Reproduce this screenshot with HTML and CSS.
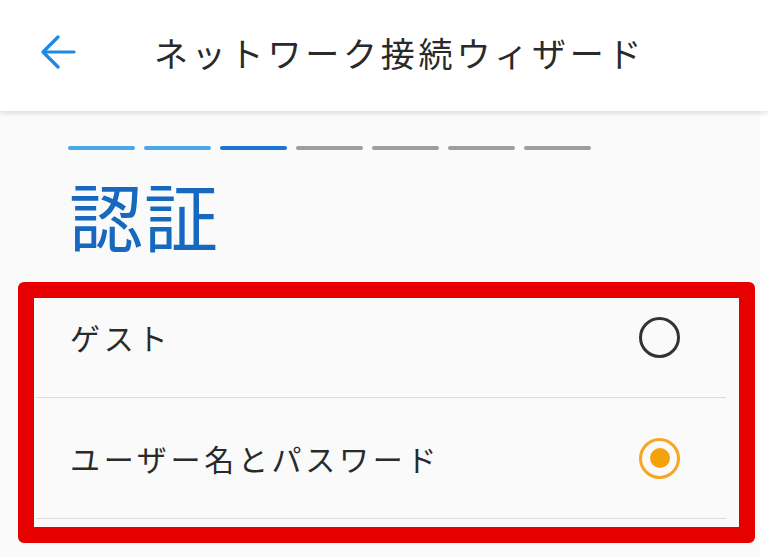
FILE: index.html
```html
<!DOCTYPE html>
<html lang="ja">
<head>
<meta charset="utf-8">
<title>ネットワーク接続ウィザード</title>
<link rel="stylesheet" href="styles.css">
</head>
<body>
<div class="page">
  <header class="appbar">
    <button class="back" aria-label="戻る">
      <svg width="36" height="34" viewBox="0 0 36 34" fill="none" stroke="#1e88e5" stroke-width="3.2" stroke-linecap="round" stroke-linejoin="round">
        <path d="M3 17 H33"/>
        <path d="M17 2 L2 17 L17 32"/>
      </svg>
    </button>
    <h1 class="appbar-title">ネットワーク接続ウィザード</h1>
  </header>
  <main class="content">
    <div class="steps">
      <span class="step done"></span>
      <span class="step done"></span>
      <span class="step current"></span>
      <span class="step"></span>
      <span class="step"></span>
      <span class="step"></span>
      <span class="step"></span>
    </div>
    <h2 class="section-title">認証</h2>
    <ul class="options">
      <li class="option">
        <span class="option-label">ゲスト</span>
        <span class="radio"></span>
      </li>
      <li class="option">
        <span class="option-label">ユーザー名とパスワード</span>
        <span class="radio checked"></span>
      </li>
    </ul>
    <div class="highlight"></div>
  </main>
</div>
</body>
</html>
```
FILE: styles.css
```css
html, body {
  margin: 0;
  padding: 0;
  background: #ffffff;
}
body {
  font-family: "Noto Sans CJK JP", "Noto Sans", sans-serif;
  width: 768px;
  height: 557px;
  overflow: hidden;
}
.page {
  width: 760px;
  height: 557px;
  background: #fafafa;
  position: relative;
}
.appbar {
  height: 111px;
  background: #ffffff;
  display: flex;
  align-items: center;
  box-shadow: 0 2px 5px rgba(0, 0, 0, 0.13);
  position: relative;
  z-index: 1;
  width: 768px;
}
.back {
  border: none;
  background: none;
  padding: 0;
  margin: 0 0 0 41px;
  width: 36px;
  height: 34px;
  display: flex;
  align-items: center;
  justify-content: center;
  position: relative;
  top: -4px;
}
.appbar-title {
  margin: 0 0 0 77px;
  font-size: 34px;
  font-weight: 400;
  letter-spacing: 3.8px;
  color: #2a2a2a;
  line-height: 1;
  position: relative;
  top: -3px;
}
.content {
  padding-top: 35px;
}
.steps {
  display: flex;
  gap: 9px;
  margin-left: 68px;
}
.step {
  width: 67px;
  height: 4px;
  border-radius: 2px;
  background: #9e9e9e;
}
.step.done {
  background: #4aa8e6;
}
.step.current {
  background: #1a74d0;
}
.section-title {
  margin: 27px 0 0 69px;
  font-size: 74px;
  font-weight: 400;
  line-height: 74px;
  color: #1769c0;
  letter-spacing: 1px;
}
.options {
  list-style: none;
  margin: 26px 34px 0 36px;
  padding: 0;
}
.option {
  height: 120px;
  display: flex;
  align-items: center;
  justify-content: space-between;
  padding: 0 46px 0 34px;
  border-bottom: 1px solid #dcdcdc;
}
.option-label {
  font-size: 30px;
  letter-spacing: 3.7px;
  color: #2a2a2a;
}
.radio {
  width: 41px;
  height: 41px;
  box-sizing: border-box;
  border: 3px solid #333333;
  border-radius: 50%;
  display: flex;
  align-items: center;
  justify-content: center;
}
.radio.checked {
  border-color: #f5a623;
}
.radio.checked::after {
  content: "";
  width: 20px;
  height: 20px;
  border-radius: 50%;
  background: #f5a20a;
}
.highlight {
  position: absolute;
  left: 18px;
  top: 282px;
  width: 737px;
  height: 261px;
  box-sizing: border-box;
  border: 16px solid #e60000;
  border-radius: 6px;
  z-index: 2;
}
```
